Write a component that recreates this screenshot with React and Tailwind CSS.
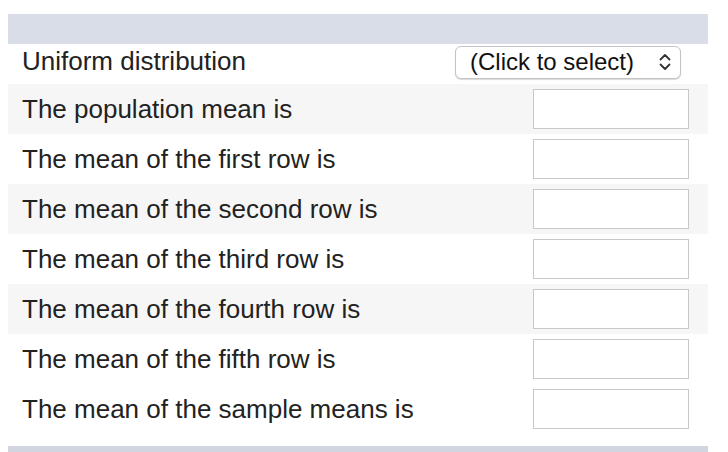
import React from 'react';

const rows = [
  'The population mean is',
  'The mean of the first row is',
  'The mean of the second row is',
  'The mean of the third row is',
  'The mean of the fourth row is',
  'The mean of the fifth row is',
  'The mean of the sample means is',
];

const App = () => {
  return (
    <div className="w-[728px] h-[452px] bg-white overflow-hidden pt-[14px] pl-[8px] pr-[20px] font-['Liberation_Sans',Arial,sans-serif] text-[#222]">
      <div className="h-[30px] bg-[#d9dde8]" />
      <div className="h-[40px] flex items-center justify-between pl-[14px] pr-[27px] text-[26px]">
        <span className="mt-[-5px]">Uniform distribution</span>
        <div className="w-[226px] h-[33px] mt-[-4px] flex items-center justify-between pl-[14px] pr-[8px] border border-[#c4c4c4] rounded-[6px] shadow-[0_1px_1px_rgba(0,0,0,0.15)] bg-white text-[24px] text-[#111]">
          <span className="leading-none">(Click to select)</span>
          <svg width="14" height="22" viewBox="0 0 14 22" fill="none" stroke="#333" strokeWidth="1.8" strokeLinecap="round" strokeLinejoin="round">
            <path d="M2.5 8.5 L7 4 L11.5 8.5" />
            <path d="M2.5 13.5 L7 18 L11.5 13.5" />
          </svg>
        </div>
      </div>
      {rows.map((label, i) => (
        <div
          key={label}
          className={`h-[50px] flex items-center justify-between pl-[14px] pr-[19px] text-[26px] ${i % 2 === 0 && i < 6 ? 'bg-[#f6f6f6]' : 'bg-white'}`}
        >
          <span>{label}</span>
          <div className="w-[156px] h-[40px] border border-[#c8c8c8] bg-white" />
        </div>
      ))}
      <div className="h-[12px]" />
      <div className="h-[6px] bg-[#d0d5df]" />
    </div>
  );
};

export default App;
